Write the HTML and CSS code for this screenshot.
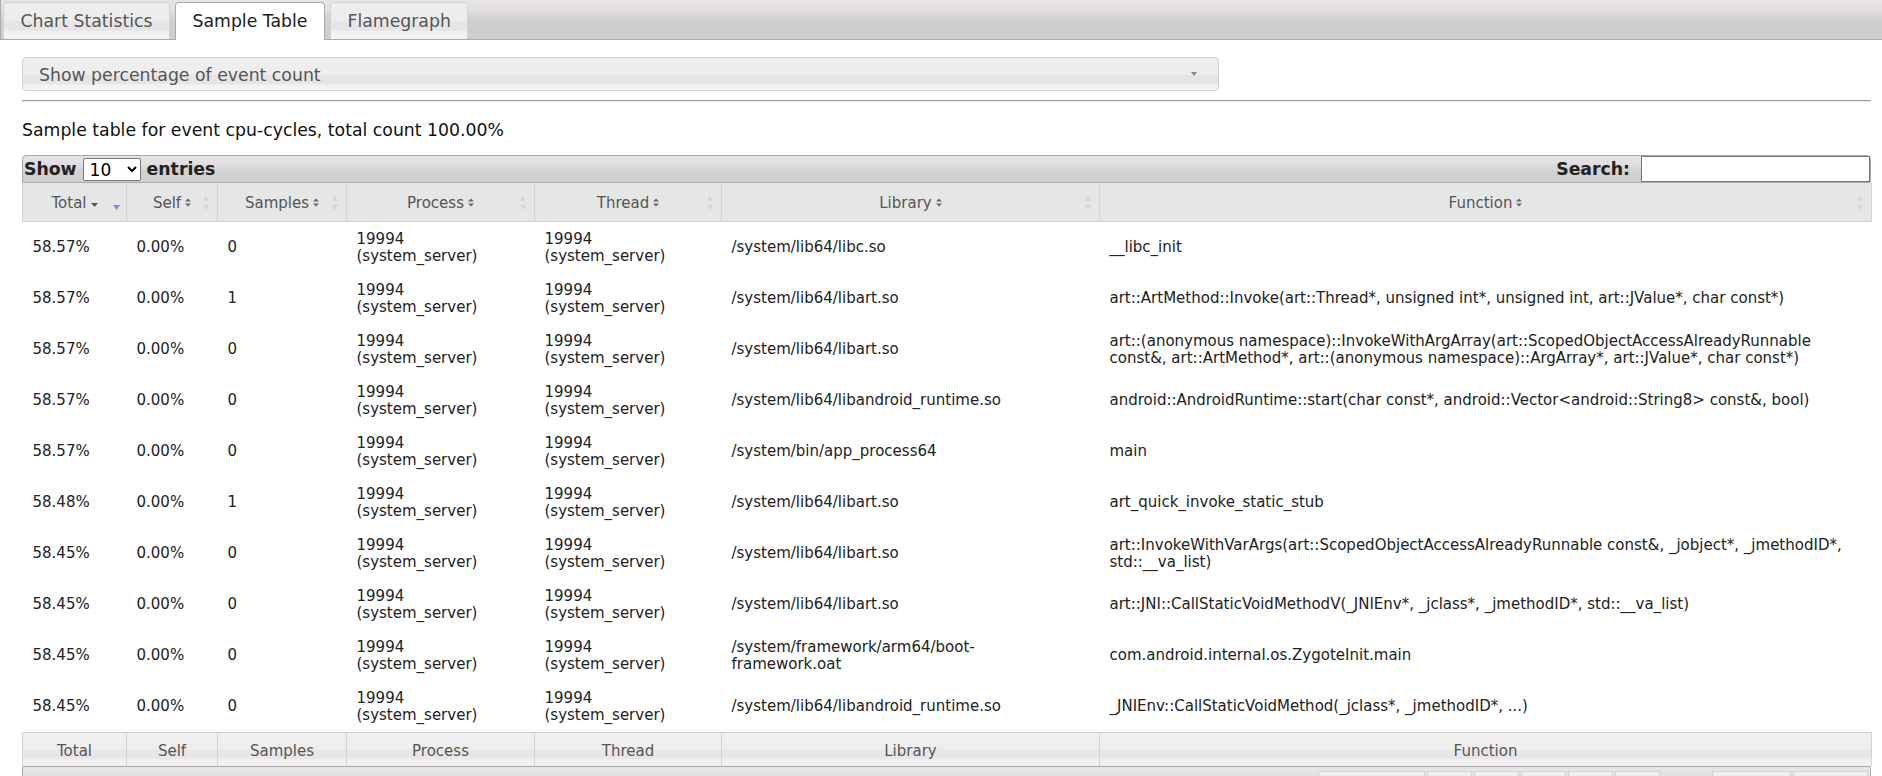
FILE: index.html
```html
<!DOCTYPE html>
<html>
<head>
<meta charset="utf-8">
<title>Sample Table</title>
<link rel="stylesheet" href="styles.css">
</head>
<body>
<div class="page">
  <ul class="tabnav">
    <li class="tab">Chart Statistics</li>
    <li class="tab active">Sample Table</li>
    <li class="tab">Flamegraph</li>
  </ul>
  <div class="panel">
    <div class="selectmenu"><span class="selectmenu-text">Show percentage of event count</span><span class="caret"></span></div>
    <hr class="rule">
    <p class="title">Sample table for event cpu-cycles, total count 100.00%</p>
    <div class="dt">
      <div class="dt-top">
        <label class="len">Show <select class="len-select"><option>10</option><option>25</option><option>50</option><option>100</option></select> entries</label>
        <label class="search">Search:<input class="search-input" type="text"></label>
      </div>
      <table class="grid">
        <colgroup>
          <col class="c-total"><col class="c-self"><col class="c-samples"><col class="c-process"><col class="c-thread"><col class="c-library"><col class="c-function">
        </colgroup>
        <thead>
          <tr>
            <th class="first">Total<svg class="ico" width="7" height="4" viewBox="0 0 7 4"><path d="M0 0H7L3.5 4Z" fill="#555"/></svg><svg class="sort-desc" width="7" height="5" viewBox="0 0 7 5"><path d="M0 0H7L3.5 5Z" fill="#8585f5"/></svg></th>
            <th>Self<svg class="ico" width="6" height="9" viewBox="0 0 6 9"><path d="M0 3.5L3 0.5L6 3.5Z M0 5.5L3 8.5L6 5.5Z" fill="#666"/></svg><svg class="sort-both" width="6" height="14" viewBox="0 0 6 14"><path d="M0 5L3 0L6 5Z M0 9L3 14L6 9Z" fill="#d4d4d4"/></svg></th>
            <th>Samples<svg class="ico" width="6" height="9" viewBox="0 0 6 9"><path d="M0 3.5L3 0.5L6 3.5Z M0 5.5L3 8.5L6 5.5Z" fill="#666"/></svg><svg class="sort-both" width="6" height="14" viewBox="0 0 6 14"><path d="M0 5L3 0L6 5Z M0 9L3 14L6 9Z" fill="#d4d4d4"/></svg></th>
            <th>Process<svg class="ico" width="6" height="9" viewBox="0 0 6 9"><path d="M0 3.5L3 0.5L6 3.5Z M0 5.5L3 8.5L6 5.5Z" fill="#666"/></svg><svg class="sort-both" width="6" height="14" viewBox="0 0 6 14"><path d="M0 5L3 0L6 5Z M0 9L3 14L6 9Z" fill="#d4d4d4"/></svg></th>
            <th>Thread<svg class="ico" width="6" height="9" viewBox="0 0 6 9"><path d="M0 3.5L3 0.5L6 3.5Z M0 5.5L3 8.5L6 5.5Z" fill="#666"/></svg><svg class="sort-both" width="6" height="14" viewBox="0 0 6 14"><path d="M0 5L3 0L6 5Z M0 9L3 14L6 9Z" fill="#d4d4d4"/></svg></th>
            <th>Library<svg class="ico" width="6" height="9" viewBox="0 0 6 9"><path d="M0 3.5L3 0.5L6 3.5Z M0 5.5L3 8.5L6 5.5Z" fill="#666"/></svg><svg class="sort-both" width="6" height="14" viewBox="0 0 6 14"><path d="M0 5L3 0L6 5Z M0 9L3 14L6 9Z" fill="#d4d4d4"/></svg></th>
            <th>Function<svg class="ico" width="6" height="9" viewBox="0 0 6 9"><path d="M0 3.5L3 0.5L6 3.5Z M0 5.5L3 8.5L6 5.5Z" fill="#666"/></svg><svg class="sort-both" width="6" height="14" viewBox="0 0 6 14"><path d="M0 5L3 0L6 5Z M0 9L3 14L6 9Z" fill="#d4d4d4"/></svg></th>
          </tr>
        </thead>
        <tbody>
          <tr><td>58.57%</td><td>0.00%</td><td>0</td><td>19994 (system_server)</td><td>19994 (system_server)</td><td>/system/lib64/libc.so</td><td>__libc_init</td></tr>
          <tr><td>58.57%</td><td>0.00%</td><td>1</td><td>19994 (system_server)</td><td>19994 (system_server)</td><td>/system/lib64/libart.so</td><td>art::ArtMethod::Invoke(art::Thread*, unsigned int*, unsigned int, art::JValue*, char const*)</td></tr>
          <tr><td>58.57%</td><td>0.00%</td><td>0</td><td>19994 (system_server)</td><td>19994 (system_server)</td><td>/system/lib64/libart.so</td><td>art::(anonymous namespace)::InvokeWithArgArray(art::ScopedObjectAccessAlreadyRunnable const&amp;, art::ArtMethod*, art::(anonymous namespace)::ArgArray*, art::JValue*, char const*)</td></tr>
          <tr><td>58.57%</td><td>0.00%</td><td>0</td><td>19994 (system_server)</td><td>19994 (system_server)</td><td>/system/lib64/libandroid_runtime.so</td><td>android::AndroidRuntime::start(char const*, android::Vector&lt;android::String8&gt; const&amp;, bool)</td></tr>
          <tr><td>58.57%</td><td>0.00%</td><td>0</td><td>19994 (system_server)</td><td>19994 (system_server)</td><td>/system/bin/app_process64</td><td>main</td></tr>
          <tr><td>58.48%</td><td>0.00%</td><td>1</td><td>19994 (system_server)</td><td>19994 (system_server)</td><td>/system/lib64/libart.so</td><td>art_quick_invoke_static_stub</td></tr>
          <tr><td>58.45%</td><td>0.00%</td><td>0</td><td>19994 (system_server)</td><td>19994 (system_server)</td><td>/system/lib64/libart.so</td><td>art::InvokeWithVarArgs(art::ScopedObjectAccessAlreadyRunnable const&amp;, _jobject*, _jmethodID*, std::__va_list)</td></tr>
          <tr><td>58.45%</td><td>0.00%</td><td>0</td><td>19994 (system_server)</td><td>19994 (system_server)</td><td>/system/lib64/libart.so</td><td>art::JNI::CallStaticVoidMethodV(_JNIEnv*, _jclass*, _jmethodID*, std::__va_list)</td></tr>
          <tr><td>58.45%</td><td>0.00%</td><td>0</td><td>19994 (system_server)</td><td>19994 (system_server)</td><td>/system/framework/arm64/boot-<br>framework.oat</td><td>com.android.internal.os.ZygoteInit.main</td></tr>
          <tr><td>58.45%</td><td>0.00%</td><td>0</td><td>19994 (system_server)</td><td>19994 (system_server)</td><td>/system/lib64/libandroid_runtime.so</td><td>_JNIEnv::CallStaticVoidMethod(_jclass*, _jmethodID*, ...)</td></tr>
        </tbody>
        <tfoot>
          <tr><th class="first">Total</th><th>Self</th><th>Samples</th><th>Process</th><th>Thread</th><th>Library</th><th>Function</th></tr>
        </tfoot>
      </table>
      <div class="dt-bottom">
        <div class="pager">
          <span class="pg pg-prev"></span>
          <span class="pg pg-num"></span>
          <span class="pg pg-num"></span>
          <span class="pg pg-num"></span>
          <span class="pg pg-num"></span>
          <span class="pg pg-num"></span>
          <span class="pg-ellipsis"></span>
          <span class="pg pg-last"></span>
          <span class="pg pg-next"></span>
        </div>
      </div>
    </div>
  </div>
</div>
</body>
</html>
```
FILE: styles.css
```css
* { box-sizing: border-box; }

body {
  margin: 0;
  font-family: "DejaVu Sans", Verdana, sans-serif;
  color: #222;
  background: #fff;
}

.page {
  height: 776px;
  overflow: hidden;
}

/* ---------- tabs ---------- */
.tabnav {
  display: flex;
  align-items: flex-end;
  gap: 5px;
  height: 40px;
  margin: 0;
  padding: 0 0 0 2px;
  list-style: none;
  border-left: 1px solid #aaa;
  border-bottom: 1px solid #aaa;
  background: linear-gradient(to bottom, #e8e4e8 0%, #e5e2e5 18%, #d4d3d4 45%, #cecece 60%, #cecece 100%);
}

.tab {
  height: 37px;
  padding: 8px 16.5px 0;
  border: 1px solid #d3d3d3;
  border-bottom: 0;
  border-radius: 4px 4px 0 0;
  font-size: 17.3px;
  line-height: 20px;
  color: #555;
  white-space: nowrap;
  background: linear-gradient(to bottom, #eeeeee 0%, #ededed 48%, #e7e5e7 52%, #e6e4e6 74%, #f3f0f3 80%, #f5f2f5 100%);
}

.tab.active {
  height: 38px;
  margin-bottom: -1px;
  background: #fff;
  border-color: #aaa;
  color: #212121;
}

/* ---------- panel ---------- */
.panel {
  padding: 17px 11px 0 22px;
}

.selectmenu {
  width: 1197px;
  height: 34px;
  display: flex;
  align-items: center;
  justify-content: space-between;
  padding: 2px 21px 0 16px;
  border: 1px solid #d3d3d3;
  border-radius: 4px;
  color: #555;
  font-size: 17.3px;
  background: linear-gradient(to bottom, #eeeeee 0%, #eeeeee 50%, #e6e4e6 55%, #e6e4e6 79%, #f4f1f4 84%, #f6f3f6 100%);
}

.caret {
  width: 0;
  height: 0;
  margin-top: -3px;
  border-left: 3px solid transparent;
  border-right: 3px solid transparent;
  border-top: 4px solid #888;
}

.rule {
  height: 0;
  margin: 9px 0 0;
  border: 0;
  border-top: 1px solid #9a9a9a;
  border-bottom: 1px solid #ececec;
}

.title {
  margin: 18px 0 15px;
  font-size: 17.3px;
  line-height: 20px;
  color: #111;
}

/* ---------- data table ---------- */
.dt-top {
  height: 28px;
  display: flex;
  align-items: center;
  justify-content: space-between;
  padding: 0 0 0 1px;
  border: 1px solid #aaa;
  border-radius: 4px 4px 0 0;
  font-size: 17.3px;
  font-weight: bold;
  color: #222;
  background: linear-gradient(to bottom, #e6e3e6 0%, #e3e0e3 25%, #d3d2d3 60%, #cecece 100%);
}

.len {
  display: flex;
  align-items: center;
  white-space: nowrap;
}

.len-select {
  width: 58px;
  height: 23px;
  margin: 0 6px 0 6px;
  padding: 0 2px;
  font-family: "DejaVu Sans", Verdana, sans-serif;
  font-size: 17px;
  font-weight: normal;
  color: #000;
  border: 1px solid #767676;
  border-radius: 2px;
  background: #fff;
}

.search {
  display: flex;
  align-items: center;
  height: 100%;
}

.search-input {
  width: 229px;
  height: 26px;
  margin-left: 11px;
  border: 1px solid #767676;
  background: #fff;
}

.grid {
  width: 100%;
  table-layout: fixed;
  border-collapse: collapse;
  font-size: 15px;
}

.c-total { width: 104px; }
.c-self { width: 91px; }
.c-samples { width: 129px; }
.c-process { width: 188px; }
.c-thread { width: 187px; }
.c-library { width: 378px; }
.c-function { width: 772px; }

.grid thead th {
  position: relative;
  height: 38px;
  padding: 2px 10px 0;
  font-weight: normal;
  text-align: center;
  color: #555;
  background: #e6e6e6;
  border-right: 1px solid #d3d3d3;
  border-bottom: 1px solid #d3d3d3;
  white-space: nowrap;
}

.grid th.first {
  border-left: 1px solid #d3d3d3;
}

.ico {
  margin-left: 4px;
  vertical-align: 1px;
}

.sort-both {
  position: absolute;
  right: 8px;
  top: 13px;
}

.sort-desc {
  position: absolute;
  right: 6px;
  top: 22px;
}

.grid td {
  padding: 9px 10px 7px;
  line-height: 17.5px;
  color: #222;
  vertical-align: middle;
}

.grid tfoot th {
  height: 34px;
  padding: 4px 10px 0;
  font-weight: normal;
  text-align: center;
  color: #555;
  border-top: 1px solid #d3d3d3;
  border-right: 1px solid #d3d3d3;
  background: linear-gradient(to bottom, #efefef 0%, #eeeeee 50%, #e8e6e8 55%, #e8e6e8 78%, #f3f0f3 83%, #f4f1f4 100%);
}

.dt-bottom {
  display: flex;
  justify-content: flex-end;
  align-items: flex-start;
  height: 40px;
  padding: 4px 2px 6px 8px;
  border: 1px solid #aaa;
  border-radius: 0 0 4px 4px;
  background: linear-gradient(to bottom, #e8e4e8 0%, #e5e2e5 20%, #d4d3d4 50%, #cecece 100%);
}

.pager {
  display: flex;
  align-items: flex-start;
  gap: 2px;
}

.pg {
  height: 30px;
  border: 1px solid #d3d3d3;
  background: linear-gradient(to bottom, #efefef 0%, #eeeeee 50%, #e6e4e6 55%, #f4f1f4 100%);
}

.pg-prev { width: 107px; }
.pg-num { width: 45px; }
.pg-last { width: 79px; }
.pg-next { width: 75px; }

.pg-ellipsis {
  width: 48px;
  height: 30px;
}
```
